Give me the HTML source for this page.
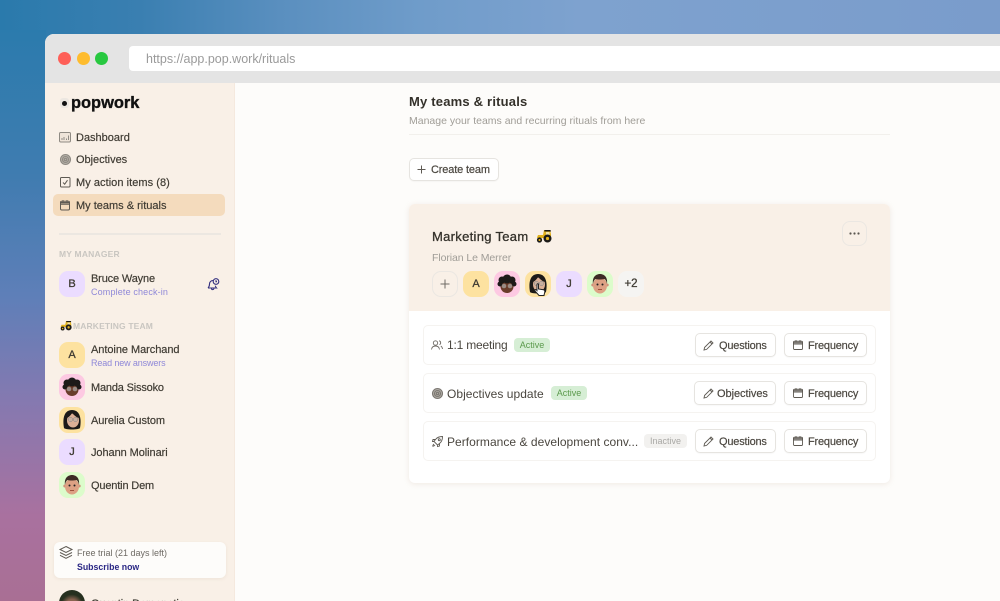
<!DOCTYPE html>
<html><head><meta charset="utf-8">
<style>
*{box-sizing:border-box;margin:0;padding:0}
html,body{width:1000px;height:601px;overflow:hidden}
body{position:relative;font-family:"Liberation Sans",sans-serif;background:#7a9ccb;color:#3f3b33}
.a{position:absolute}
.t{position:absolute;white-space:nowrap;line-height:14px}
.m{-webkit-text-stroke:.18px currentColor}
.av{position:absolute;width:26px;height:26px;border-radius:9px;display:flex;align-items:center;justify-content:center;font-size:11px;color:#3f3b33;-webkit-text-stroke:.3px #3f3b33;overflow:hidden}
.y{background:#fde2a0}.p{background:#ebdcff}.k{background:#fdc9e2}.g{background:#dcfccb}
.btn{position:absolute;height:24px;background:#fff;border:1px solid #e6e4e0;border-radius:5px;box-shadow:0 1px 1px rgba(0,0,0,.03)}
.row{position:absolute;left:423px;width:453px;height:40px;background:#fff;border:1px solid #f5f3f0;border-radius:5px}
.tag{position:absolute;height:14px;border-radius:4px;font-size:9px;line-height:14px;text-align:center}
.on{background:#d6eed5;color:#5b9a4c}
.off{background:#f2f1ef;color:#a9a8a5}
svg{position:absolute;overflow:visible}
</style></head>
<body>
<div class="a" style="left:0;top:0;width:1000px;height:40px;background:linear-gradient(90deg,#2a7aac 0%,#3a7fb1 14%,#5a8fbf 28%,#6f9cca 42%,#7ea2cf 58%,#7a9ccb 100%)"></div>
<div class="a" style="left:0;top:30px;width:46px;height:571px;background:linear-gradient(180deg,#2b7bad 0%,#3f7cb0 25%,#5f7fb8 47%,#8579b0 65%,#a9719f 85%,#a96f94 100%)"></div>

<div class="a" style="left:45px;top:34px;width:955px;height:567px;background:#fdfcfa;border-radius:9px 0 0 0;overflow:hidden"></div>
<div class="a" style="left:45px;top:34px;width:955px;height:49px;background:#e4e4e4;border-radius:9px 0 0 0"></div>
<div class="a" style="left:58px;top:52px;width:13px;height:13px;border-radius:50%;background:#fe5f58"></div>
<div class="a" style="left:77px;top:52px;width:13px;height:13px;border-radius:50%;background:#febc2e"></div>
<div class="a" style="left:95px;top:52px;width:13px;height:13px;border-radius:50%;background:#28c840"></div>
<div class="a" style="left:129px;top:46px;width:871px;height:25px;background:#fff;border-radius:4px 0 0 4px"></div>
<div class="t" style="left:146px;top:52px;font-size:12.5px;color:#9a9a9a">https://app.pop.work/rituals</div>

<!-- sidebar -->
<div class="a" style="left:45px;top:83px;width:190px;height:518px;background:#f9f0e7;border-right:1px solid #f5e9de"></div>
<div class="a" style="left:60px;top:98px;width:9px;height:10px;border-radius:3px;background:#ece7e1"></div>
<div class="a" style="left:62px;top:101px;width:5px;height:5px;border-radius:50%;background:#111"></div>
<div class="t" style="left:71px;top:94px;font-size:16.5px;line-height:18px;font-weight:bold;color:#111;letter-spacing:-.05px;-webkit-text-stroke:.35px #111">popwork</div>

<svg style="left:59px;top:132px" width="12" height="10" viewBox="0 0 12 10" fill="#efe4d9" stroke="#8f8a83" stroke-width="1"><rect x=".5" y=".5" width="11" height="9.5" rx="1.2"/><path d="M3 8V6M5 8V5M7.5 8V6.5M9.5 8V3.5"/></svg>
<div class="t m" style="left:76px;top:130.5px;font-size:11px;color:#3f3b33">Dashboard</div>
<svg style="left:60px;top:154px" width="11" height="11" viewBox="0 0 11 11" fill="#b5b0a8" stroke="#8f8a83" stroke-width="1.1"><circle cx="5.5" cy="5.5" r="5"/><circle cx="5.5" cy="5.5" r="3"/><circle cx="5.5" cy="5.5" r="1.2"/></svg>
<div class="t m" style="left:76px;top:153px;font-size:11px;letter-spacing:-.02px">Objectives</div>
<svg style="left:60px;top:177px" width="11" height="11" viewBox="0 0 11 11" fill="none" stroke="#5e5a53" stroke-width="1"><rect x=".5" y=".5" width="9.5" height="9.5" rx="1"/><path d="M3 5.5l1.7 1.7L7.5 3.2"/></svg>
<div class="t m" style="left:76px;top:175.5px;font-size:11px;letter-spacing:.05px">My action items (8)</div>
<div class="a" style="left:53px;top:194px;width:172px;height:22px;background:#f4dbbd;border-radius:5px"></div>
<svg style="left:60px;top:200px" width="11" height="11" viewBox="0 0 11 11" fill="none" stroke="#5e5a53" stroke-width="1"><rect x=".5" y="1.2" width="9" height="8.8" rx="1.2"/><path d="M.5 2.5h9v1.8h-9z" fill="#5e5a53" fill-opacity=".5"/><path d="M3 0v2M7 0v2"/></svg>
<div class="t m" style="left:76px;top:199px;font-size:11px">My teams &amp; rituals</div>

<div class="a" style="left:59px;top:233px;width:162px;height:2px;background:#ece7e1"></div>
<div class="t" style="left:59px;top:247px;font-size:8.5px;font-weight:bold;color:#c9c6c1;letter-spacing:.2px">MY MANAGER</div>

<div class="av p" style="left:59px;top:271px">B</div>
<div class="t m" style="left:91px;top:272px;font-size:11px;letter-spacing:-.15px">Bruce Wayne</div>
<div class="t" style="left:91px;top:285px;font-size:9px;color:#8f88d8;letter-spacing:.15px">Complete check-in</div>
<svg style="left:207px;top:278px" width="13" height="13" viewBox="0 0 13 13" fill="none" stroke="#34307f" stroke-width="1.1"><path d="M1 10c1-1 1.500-2 1.500-4S4 2.500 6 2.500M1 10h8.500c-.7-.7-1-1.300-1.200-2.300M4.500 10.500c.2 1.500 2 1.500 2.500 0"/><circle cx="9" cy="3.500" r="2.800"/><path d="M9 2.200v1.500h1"/></svg>

<svg style="left:60px;top:320px" width="12" height="11" viewBox="0 0 16 14"><path d="M1 8.500 2 6h5l1-5h6l1 4v4H1z" fill="#e3b31f"/><path d="M8.500 1h6l.5 1.500H8.200z" fill="#1b1a18"/><rect x="10" y="3" width="3.500" height="3" fill="#f6e6a6"/><circle cx="11.500" cy="9.500" r="4" fill="#1b1a18"/><circle cx="11.500" cy="9.500" r="1.600" fill="#e3b31f"/><circle cx="3.500" cy="11" r="2.600" fill="#1b1a18"/><circle cx="3.500" cy="11" r="1" fill="#e3b31f"/></svg>
<div class="t" style="left:73px;top:319px;font-size:8.5px;font-weight:bold;color:#c9c6c1;letter-spacing:.15px">MARKETING TEAM</div>

<div class="av y" style="left:59px;top:342px">A</div>
<div class="t m" style="left:91px;top:343px;font-size:11px;letter-spacing:-.05px">Antoine Marchand</div>
<div class="t" style="left:91px;top:356px;font-size:9px;color:#8f88d8;letter-spacing:-.13px">Read new answers</div>

<div class="av k" style="left:59px;top:373.5px"><svg width="26" height="26" viewBox="0 0 26 26"><circle cx="13" cy="15.500" r="6.500" fill="#6a3c2a"/><g fill="#1d1a18"><circle cx="13" cy="8" r="4.500"/><circle cx="8" cy="9" r="3.500"/><circle cx="18" cy="9" r="3.500"/><circle cx="6" cy="13" r="2.500"/><circle cx="20" cy="13" r="2.500"/></g><circle cx="10" cy="15" r="2.300" fill="#9a8b84"/><circle cx="16" cy="15" r="2.300" fill="#9a8b84"/></svg></div>
<div class="t m" style="left:91px;top:381px;font-size:11px;letter-spacing:-.18px">Manda Sissoko</div>
<div class="av y" style="left:59px;top:407px"><svg width="26" height="26" viewBox="0 0 26 26"><path d="M5 21C3 10 6 3 13 3s10 7 8 18c-1 2-15 2-16 0z" fill="#1c1a18"/><ellipse cx="14" cy="13.500" rx="6" ry="7" fill="#dcb096"/><path d="M8 11c2-1 4-3 5-5 2 2 4 4 6.500 5l-1-5-5-2-4 2z" fill="#1c1a18"/><circle cx="11.500" cy="12.500" r="2.200" fill="#c9b0a0" stroke="#888" stroke-width=".5"/><circle cx="16.500" cy="12.500" r="2.200" fill="#c9b0a0" stroke="#888" stroke-width=".5"/></svg></div>
<div class="t m" style="left:91px;top:413.5px;font-size:11px;letter-spacing:-.09px">Aurelia Custom</div>
<div class="av p" style="left:59px;top:439px">J</div>
<div class="t m" style="left:91px;top:446px;font-size:11px;letter-spacing:-.07px">Johann Molinari</div>
<div class="av g" style="left:59px;top:472px"><svg width="26" height="26" viewBox="0 0 26 26"><circle cx="5.800" cy="14" r="1.500" fill="#d0917a"/><circle cx="20.200" cy="14" r="1.500" fill="#d0917a"/><ellipse cx="13" cy="14.500" rx="7" ry="8" fill="#dda184"/><path d="M6 13C5 6 9 3 13 3s8 3 7 10c-.5-3-1.500-4.500-2.500-5-3 .7-7 .7-9 0-1 .7-2 2-2.500 5z" fill="#3c2a25"/><circle cx="10.500" cy="13.500" r="1" fill="#222"/><circle cx="15.500" cy="13.500" r="1" fill="#222"/><path d="M11 18.500h4" stroke="#a0523d"/></svg></div>
<div class="t m" style="left:91px;top:479px;font-size:11px;letter-spacing:-.16px">Quentin Dem</div>

<div class="a" style="left:54px;top:542px;width:172px;height:36px;background:#fdfcfa;border-radius:6px;box-shadow:0 1px 3px rgba(190,170,150,.18)"></div>
<svg style="left:59px;top:546px" width="14" height="13" viewBox="0 0 14 13" fill="none" stroke="#5e5a53" stroke-width="1"><path d="M7 .5l6 3-6 3-6-3zM1 6.500l6 3 6-3M1 9.300l6 3 6-3"/></svg>
<div class="t" style="left:77px;top:546px;font-size:9px;color:#6e6a64">Free trial (21 days left)</div>
<div class="t" style="left:77px;top:560px;font-size:8.75px;font-weight:bold;color:#2a2784">Subscribe now</div>

<div class="a" style="left:59px;top:590px;width:26px;height:26px;border-radius:50%;background:radial-gradient(circle at 50% 60%,#8a6350 0 30%,#26301f 55%)"></div>
<div class="t m" style="left:91px;top:597px;font-size:11px;letter-spacing:-.05px">Quentin Dorsonetie</div>

<!-- main -->
<div class="t" style="left:409px;top:94px;font-size:13px;line-height:16px;font-weight:bold;color:#34312a;letter-spacing:.2px">My teams &amp; rituals</div>
<div class="t" style="left:409px;top:113.5px;font-size:10.5px;color:#a09d97">Manage your teams and recurring rituals from here</div>
<div class="a" style="left:409px;top:134px;width:481px;height:1px;background:#f2f0ec"></div>

<div class="btn" style="left:409px;top:158px;width:90px;height:23px"></div>
<svg style="left:417px;top:165px" width="9" height="9" viewBox="0 0 9 9" stroke="#5e5a53" stroke-width="1"><path d="M4.500 .5v8M.5 4.500h8"/></svg>
<div class="t m" style="left:431px;top:163px;font-size:11px;color:#4a463f;letter-spacing:-.15px">Create team</div>

<!-- card -->
<div class="a" style="left:409px;top:204px;width:481px;height:279px;background:#fff;border-radius:6px;box-shadow:0 1px 6px rgba(190,170,150,.22)"></div>
<div class="a" style="left:409px;top:204px;width:481px;height:107px;background:#f9f0e7;border-radius:6px 6px 0 0"></div>
<div class="t" style="left:432px;top:228.5px;font-size:13px;line-height:15px;color:#34312a;letter-spacing:.3px;-webkit-text-stroke:.3px #34312a">Marketing Team</div>
<svg style="left:536px;top:229px" width="16" height="14" viewBox="0 0 16 14"><path d="M1 8.500 2 6h5l1-5h6l1 4v4H1z" fill="#e3b31f"/><path d="M8.500 1h6l.5 1.500H8.200z" fill="#1b1a18"/><rect x="10" y="3" width="3.500" height="3" fill="#f6e6a6"/><circle cx="11.500" cy="9.500" r="4" fill="#1b1a18"/><circle cx="11.500" cy="9.500" r="1.600" fill="#e3b31f"/><circle cx="3.500" cy="11" r="2.600" fill="#1b1a18"/><circle cx="3.500" cy="11" r="1" fill="#e3b31f"/></svg>
<div class="t" style="left:432px;top:250.5px;font-size:10.5px;color:#a09d97;letter-spacing:-.08px">Florian Le Merrer</div>

<div class="btn" style="left:842px;top:221px;width:25px;height:25px;background:#f9f0e7;border-radius:8px;box-shadow:none;border-color:#ebe7e2"></div>
<svg style="left:849px;top:232px" width="11" height="3" fill="#5a564f"><circle cx="1.500" cy="1.500" r="1.100"/><circle cx="5.500" cy="1.500" r="1.100"/><circle cx="9.500" cy="1.500" r="1.100"/></svg>

<div class="av" style="left:432px;top:271px;border:1px solid #ebe7e2;background:#f9f0e7"></div>
<svg style="left:440px;top:279px" width="10" height="10" stroke="#6e6a64" stroke-width="1"><path d="M5 .5v9M.5 5h9"/></svg>
<div class="av y" style="left:463px;top:271px">A</div>
<div class="av k" style="left:494px;top:271px"><svg width="26" height="26" viewBox="0 0 26 26"><circle cx="13" cy="15.500" r="6.500" fill="#6a3c2a"/><g fill="#1d1a18"><circle cx="13" cy="8" r="4.500"/><circle cx="8" cy="9" r="3.500"/><circle cx="18" cy="9" r="3.500"/><circle cx="6" cy="13" r="2.500"/><circle cx="20" cy="13" r="2.500"/></g><circle cx="10" cy="15" r="2.300" fill="#9a8b84"/><circle cx="16" cy="15" r="2.300" fill="#9a8b84"/></svg></div>
<div class="av y" style="left:525px;top:271px"><svg width="26" height="26" viewBox="0 0 26 26"><path d="M5 21C3 10 6 3 13 3s10 7 8 18c-1 2-15 2-16 0z" fill="#1c1a18"/><ellipse cx="14" cy="13.500" rx="6" ry="7" fill="#dcb096"/><path d="M8 11c2-1 4-3 5-5 2 2 4 4 6.500 5l-1-5-5-2-4 2z" fill="#1c1a18"/><circle cx="11.500" cy="12.500" r="2.200" fill="#c9b0a0" stroke="#888" stroke-width=".5"/><circle cx="16.500" cy="12.500" r="2.200" fill="#c9b0a0" stroke="#888" stroke-width=".5"/></svg></div>
<svg style="left:534px;top:283px" width="12" height="14" viewBox="0 0 12 14"><path d="M3 1.500c0-1 1.500-1 1.500 0V6l5 .8c1 .2 1.500 1 1.300 2L10 12.500H5L1 8c-.7-1 .5-2 1.500-1L3 7.500z" fill="#fff" stroke="#222" stroke-width="1"/></svg>
<div class="av p" style="left:556px;top:271px">J</div>
<div class="av g" style="left:587px;top:271px"><svg width="26" height="26" viewBox="0 0 26 26"><circle cx="5.800" cy="14" r="1.500" fill="#d0917a"/><circle cx="20.200" cy="14" r="1.500" fill="#d0917a"/><ellipse cx="13" cy="14.500" rx="7" ry="8" fill="#dda184"/><path d="M6 13C5 6 9 3 13 3s8 3 7 10c-.5-3-1.500-4.500-2.500-5-3 .7-7 .7-9 0-1 .7-2 2-2.500 5z" fill="#3c2a25"/><circle cx="10.500" cy="13.500" r="1" fill="#222"/><circle cx="15.500" cy="13.500" r="1" fill="#222"/><path d="M11 18.500h4" stroke="#a0523d"/></svg></div>
<div class="av" style="left:618px;top:271px;background:#f5f4f2;font-size:11.5px">+2</div>

<!-- rows -->
<div class="row" style="top:325px"></div>
<div class="row" style="top:373px"></div>
<div class="row" style="top:421px"></div>

<svg style="left:431px;top:340px" width="12" height="10" viewBox="0 0 12 10" fill="none" stroke="#6e6a64" stroke-width=".9"><circle cx="4.500" cy="3" r="2.200"/><path d="M.5 9.500c.3-2.500 1.800-3.500 4-3.500s3.700 1 4 3.500M8 .8a2 2 0 0 1 .5 3.800M9.800 6c1 .6 1.500 1.500 1.700 3"/></svg>
<div class="t" style="left:447px;top:338px;font-size:12px;color:#4a463f;letter-spacing:-.2px">1:1 meeting</div>
<div class="tag on" style="left:514px;top:338px;width:36px">Active</div>

<svg style="left:432px;top:388px" width="11" height="11" viewBox="0 0 11 11" fill="#b0aca5" stroke="#7c7872" stroke-width="1.1"><circle cx="5.500" cy="5.500" r="5"/><circle cx="5.500" cy="5.500" r="3"/><circle cx="5.500" cy="5.500" r="1.200"/></svg>
<div class="t" style="left:447px;top:386.5px;font-size:12px;color:#4a463f;letter-spacing:.04px">Objectives update</div>
<div class="tag on" style="left:551px;top:386px;width:36px">Active</div>

<svg style="left:432px;top:436px" width="11" height="11" viewBox="0 0 11 11" fill="none" stroke="#5e5a53" stroke-width=".9"><path d="M3.500 3.500C5 1.500 7.500.5 10.500.5c0 3-1 5.500-3 7L5.500 9 2 5.500zM3.500 3.500H1l-.5 2H2M7.500 7.500V10l-2 .5V9M2 8c-1 .8-1.200 1.500-1.200 2.200.7 0 1.400-.2 2.200-1.200"/><circle cx="7.300" cy="3.700" r="1"/></svg>
<div class="t" style="left:447px;top:434.5px;font-size:12px;color:#4a463f;letter-spacing:.04px">Performance &amp; development conv...</div>
<div class="tag off" style="left:644px;top:434px;width:43px">Inactive</div>

<!-- buttons -->
<div class="btn" style="left:695px;top:333px;width:81px"></div>
<div class="btn" style="left:784px;top:333px;width:83px"></div>
<div class="btn" style="left:694px;top:381px;width:82px"></div>
<div class="btn" style="left:784px;top:381px;width:83px"></div>
<div class="btn" style="left:695px;top:429px;width:81px"></div>
<div class="btn" style="left:784px;top:429px;width:83px"></div>

<svg style="left:703px;top:339.5px" width="11" height="11" viewBox="0 0 11 11" fill="none" stroke="#5e5a53" stroke-width=".9"><path d="M1 10l.6-2.600L8 1l2 2-6.400 6.400zM7 2l2 2"/></svg>
<svg style="left:702.5px;top:387.5px" width="11" height="11" viewBox="0 0 11 11" fill="none" stroke="#5e5a53" stroke-width=".9"><path d="M1 10l.6-2.600L8 1l2 2-6.400 6.400zM7 2l2 2"/></svg>
<svg style="left:703px;top:435.5px" width="11" height="11" viewBox="0 0 11 11" fill="none" stroke="#5e5a53" stroke-width=".9"><path d="M1 10l.6-2.600L8 1l2 2-6.400 6.400zM7 2l2 2"/></svg>
<div class="t m" style="left:719px;top:338.5px;font-size:11px;color:#4a463f;letter-spacing:-.2px">Questions</div>
<div class="t m" style="left:717px;top:386.5px;font-size:11px;color:#4a463f;letter-spacing:-.05px">Objectives</div>
<div class="t m" style="left:719px;top:434.5px;font-size:11px;color:#4a463f;letter-spacing:-.2px">Questions</div>

<svg style="left:793px;top:340px" width="10" height="10" viewBox="0 0 10 10" fill="none" stroke="#5e5a53" stroke-width=".9"><rect x=".5" y="1.200" width="9" height="8.300" rx="1"/><path d="M.5 2.200h9v1.800h-9z" fill="#5e5a53" fill-opacity=".5"/><path d="M3 0v2M7 0v2"/></svg>
<svg style="left:793px;top:388px" width="10" height="10" viewBox="0 0 10 10" fill="none" stroke="#5e5a53" stroke-width=".9"><rect x=".5" y="1.200" width="9" height="8.300" rx="1"/><path d="M.5 2.200h9v1.800h-9z" fill="#5e5a53" fill-opacity=".5"/><path d="M3 0v2M7 0v2"/></svg>
<svg style="left:793px;top:436px" width="10" height="10" viewBox="0 0 10 10" fill="none" stroke="#5e5a53" stroke-width=".9"><rect x=".5" y="1.200" width="9" height="8.300" rx="1"/><path d="M.5 2.200h9v1.800h-9z" fill="#5e5a53" fill-opacity=".5"/><path d="M3 0v2M7 0v2"/></svg>
<div class="t m" style="left:808px;top:338.5px;font-size:11px;color:#4a463f;letter-spacing:-.2px">Frequency</div>
<div class="t m" style="left:808px;top:386.5px;font-size:11px;color:#4a463f;letter-spacing:-.2px">Frequency</div>
<div class="t m" style="left:808px;top:434.5px;font-size:11px;color:#4a463f;letter-spacing:-.2px">Frequency</div>
</body></html>
